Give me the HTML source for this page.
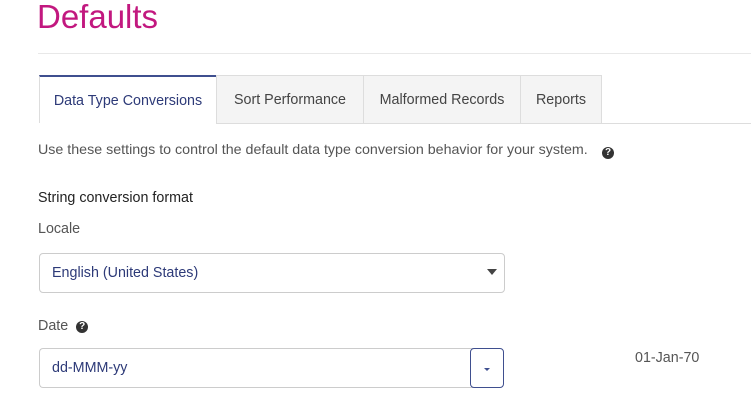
<!DOCTYPE html>
<html><head><style>
body{margin:0;width:751px;height:402px;overflow:hidden;background:#fff;font-family:"Liberation Sans",sans-serif;position:relative}
.a{position:absolute}
.tab{position:absolute;top:75px;height:48px;background:#f4f4f4;border:1px solid #ddd;border-bottom:none;box-sizing:border-box;font-size:14.3px;color:#444;line-height:48px;text-align:center}
.q{display:inline-block;width:12px;height:12px;border-radius:50%;background:#333;color:#fff;font-size:10px;font-weight:bold;line-height:12px;text-align:center;vertical-align:1px}
</style></head><body>
<div class="a" style="left:37px;top:-2px;font-size:33px;color:#c2187f">Defaults</div>
<div class="a" style="left:38px;top:53px;width:713px;height:1px;background:#e8e8e8"></div>
<div class="a" style="left:216px;top:123px;width:535px;height:1px;background:#ddd"></div>
<div class="tab" style="left:39px;width:178px;background:#fff;border-top:2px solid #3f4f8f;color:#2d3a78;line-height:48px">Data Type Conversions</div>
<div class="tab" style="left:216px;width:148px">Sort Performance</div>
<div class="tab" style="left:363px;width:158px">Malformed Records</div>
<div class="tab" style="left:520px;width:82px">Reports</div>
<div class="a" style="left:38px;top:142px;font-size:14.25px;color:#555">Use these settings to control the default data type conversion behavior for your system.</div>
<div class="a" style="left:602px;top:143px"><span class="q">?</span></div>
<div class="a" style="left:38px;top:190px;font-size:14.3px;color:#222">String conversion format</div>
<div class="a" style="left:38px;top:221px;font-size:14.3px;color:#555">Locale</div>
<div class="a" style="left:39px;top:253px;width:466px;height:40px;border:1px solid #ccc;border-radius:4px;box-sizing:border-box"></div>
<div class="a" style="left:52px;top:265px;font-size:14.3px;color:#2d3a78">English (United States)</div>
<div class="a" style="left:487px;top:269px;width:0;height:0;border-left:5px solid transparent;border-right:5px solid transparent;border-top:6px solid #444"></div>
<div class="a" style="left:38px;top:318px;font-size:14.3px;color:#555">Date &nbsp;<span class="q">?</span></div>
<div class="a" style="left:39px;top:348px;width:440px;height:40px;border:1px solid #ccc;border-right:none;border-radius:4px 0 0 4px;box-sizing:border-box"></div>
<div class="a" style="left:470px;top:348px;width:34px;height:40px;border:1px solid #3f4f8f;border-radius:4px;box-sizing:border-box;background:#fff"></div>
<div class="a" style="left:484px;top:368px;width:0;height:0;border-left:3px solid transparent;border-right:3px solid transparent;border-top:3px solid #3f4f8f"></div>
<div class="a" style="left:52px;top:360px;font-size:14.3px;color:#2d3a78">dd-MMM-yy</div>
<div class="a" style="left:635px;top:350px;font-size:14.3px;color:#555">01-Jan-70</div>
</body></html>
